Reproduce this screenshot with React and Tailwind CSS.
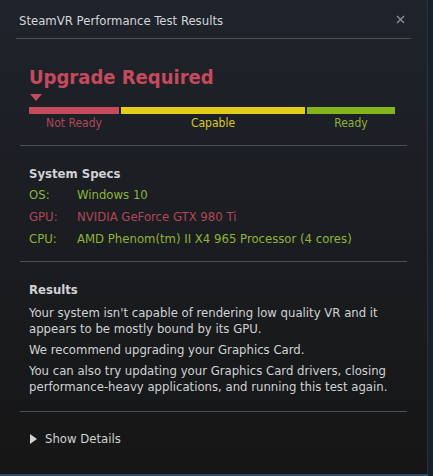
export default function App() {
  const font = { fontFamily: '"DejaVu Sans Condensed", "DejaVu Sans", Tahoma, sans-serif' };

  return (
    <div className="w-[433px] h-[476px] bg-[#15202b] flex flex-col" style={font}>
      <div className="w-[428px] h-[474px] bg-gradient-to-b from-[#1f232b] to-[#161616] border-r border-[#2a323c] flex flex-col">
        {/* header */}
        <div className="mx-4 h-[39px] border-b border-[#4a5058] flex items-center justify-between pl-[3px] pr-[6px] pt-[3px]">
          <span className="text-[13px] text-[#d4d6d8]">SteamVR Performance Test Results</span>
          <svg width="9" height="9" viewBox="0 0 9 9" className="mb-[2px]">
            <path d="M1 1L8 8M8 1L1 8" stroke="#8b9096" strokeWidth="1.4" />
          </svg>
        </div>

        {/* status */}
        <div className="px-[29px] pt-[26px] pr-[32px]">
          <h1 className="text-[20px] font-bold leading-[24px] text-[#c44a5c]">Upgrade Required</h1>
          <div className="mt-[5px] ml-[1px] w-0 h-0 border-l-[6px] border-r-[6px] border-t-[7px] border-l-transparent border-r-transparent border-t-[#c44a5c]" />
          <div className="mt-[6px] flex gap-[2px] h-[7px]">
            <div className="w-[90px] bg-[#c44a5c]" />
            <div className="w-[184px] bg-[#e3ce17]" />
            <div className="flex-1 bg-[#84b51b]" />
          </div>
          <div className="flex gap-[2px] text-[12px] leading-[16px] mt-[1px]">
            <div className="w-[90px] text-center text-[#b0475a]">Not Ready</div>
            <div className="w-[184px] text-center text-[#d8c923]">Capable</div>
            <div className="flex-1 text-center text-[#8db43a]">Ready</div>
          </div>
        </div>

        {/* specs */}
        <div className="mx-5 mt-[14px] border-t border-[#4a5058] px-[9px] pt-[18px] pb-[11px]">
          <h2 className="text-[13px] font-bold text-[#d0d2d4] leading-[20px]">System Specs</h2>
          <div className="text-[13px] leading-[22px]">
            <div className="flex text-[#8db43a]"><span className="w-[48px]">OS:</span><span>Windows 10</span></div>
            <div className="flex text-[#b0475a]"><span className="w-[48px]">GPU:</span><span>NVIDIA GeForce GTX 980 Ti</span></div>
            <div className="flex text-[#8db43a]"><span className="w-[48px]">CPU:</span><span>AMD Phenom(tm) II X4 965 Processor (4 cores)</span></div>
          </div>
        </div>

        {/* results */}
        <div className="mx-5 border-t border-[#4a5058] px-[9px] pt-[18px] pb-[16px] text-[13px] text-[#d0d2d4]">
          <h2 className="font-bold leading-[20px]">Results</h2>
          <p className="leading-[16px] mt-[5px]">Your system isn't capable of rendering low quality VR and it appears to be mostly bound by its GPU.</p>
          <p className="leading-[16px] mt-[5px]">We recommend upgrading your Graphics Card.</p>
          <p className="leading-[16px] mt-[5px]">You can also try updating your Graphics Card drivers, closing performance-heavy applications, and running this test again.</p>
        </div>

        {/* details */}
        <div className="mx-5 border-t border-[#4a5058] px-[10px] pt-[17px] flex items-center gap-[8px] text-[13px] text-[#d0d2d4]">
          <div className="w-0 h-0 border-t-[5px] border-b-[5px] border-l-[7px] border-t-transparent border-b-transparent border-l-[#d0d2d4]" />
          <span>Show Details</span>
        </div>
      </div>
      <div className="h-[2px] w-[428px] bg-[#2b4a66]" />
    </div>
  );
}
